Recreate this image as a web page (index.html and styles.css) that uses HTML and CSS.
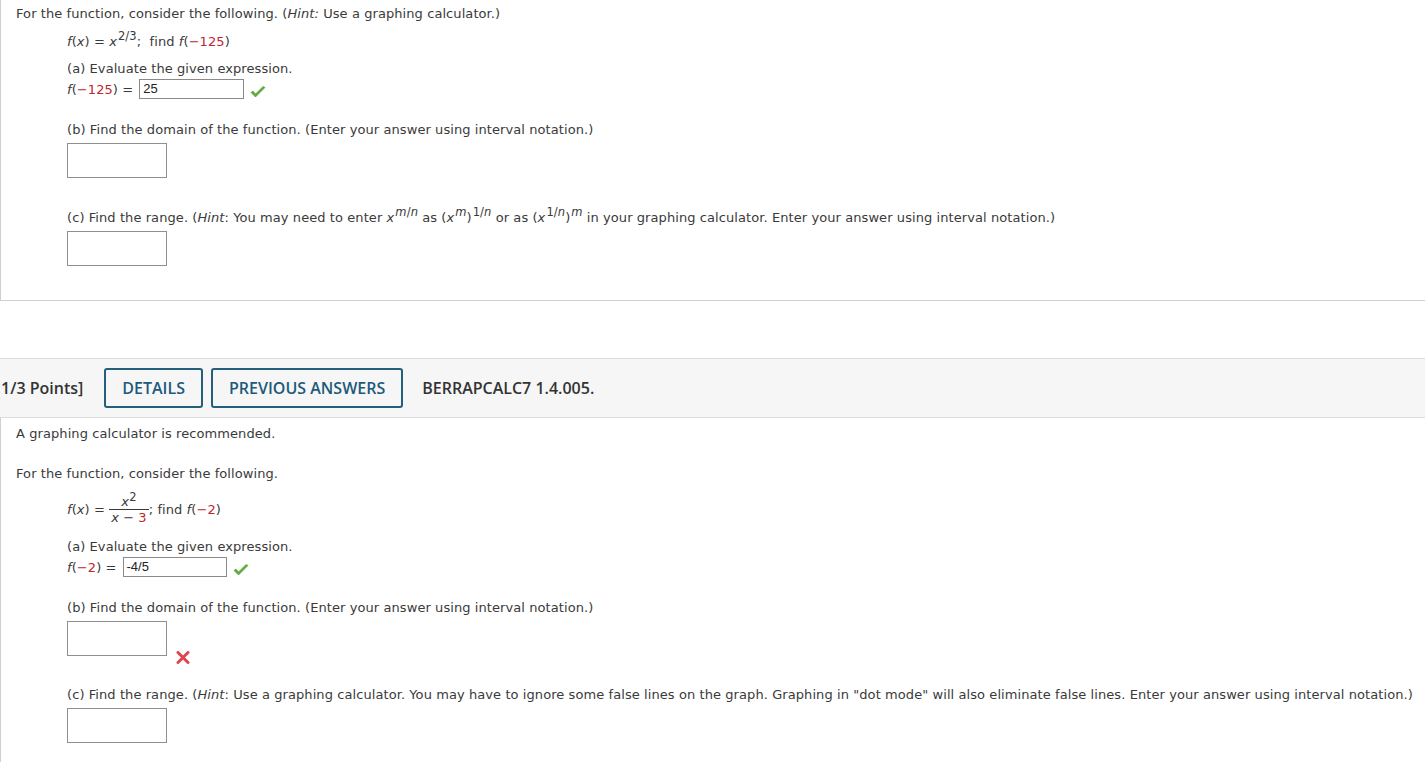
FILE: index.html
```html
<!DOCTYPE html>
<html>
<head>
<meta charset="utf-8">
<link rel="stylesheet" href="styles.css">
</head>
<body>
<div class="card card-top">
  <p class="line first">For the function, consider the following. (<i>Hint:</i> Use a graphing calculator.)</p>
  <div class="indent">
    <p class="line math1"><i>f</i>(<i>x</i>) = <i>x</i><sup>2/3</sup>;&nbsp; find <i>f</i>(<span class="red">−125</span>)</p>
    <p class="line pa">(a) Evaluate the given expression.</p>
    <div class="ansrow">
      <span><i>f</i>(<span class="red">−125</span>) = </span>
      <span class="small-input w105">25</span>
      <svg class="check" width="16" height="12" viewBox="0 0 16 12"><path d="M1 6.5 L5.5 11 L15 1.5 L13 0.5 L5.5 8 L3 5 Z" fill="#5fae3e" stroke="#4d9a2f" stroke-width="0.6" stroke-linejoin="round"/></svg>
    </div>
    <p class="line pb">(b) Find the domain of the function. (Enter your answer using interval notation.)</p>
    <div class="big-input"></div>
    <p class="line pc">(c) Find the range. (<i>Hint</i>: You may need to enter <i>x</i><sup><i>m</i>/<i>n</i></sup> as (<i>x</i><sup><i>m</i></sup>)<sup>1/<i>n</i></sup> or as (<i>x</i><sup>1/<i>n</i></sup>)<sup><i>m</i></sup> in your graphing calculator. Enter your answer using interval notation.)</p>
    <div class="big-input"></div>
  </div>
</div>

<div class="header">
  <span class="points">1/3 Points]</span>
  <span class="btn">DETAILS</span>
  <span class="btn">PREVIOUS ANSWERS</span>
  <span class="code">BERRAPCALC7 1.4.005.</span>
</div>

<div class="card card-bottom">
  <p class="line first2">A graphing calculator is recommended.</p>
  <p class="line for2">For the function, consider the following.</p>
  <div class="indent">
    <div class="mathrow">
      <span><i>f</i>(<i>x</i>) =&nbsp;</span>
      <span class="frac">
        <span class="num"><i>x</i><sup>2</sup></span>
        <span class="den"><i>x</i> − <span class="red">3</span></span>
      </span>
      <span>; find <i>f</i>(<span class="red">−2</span>)</span>
    </div>
    <p class="line pa2">(a) Evaluate the given expression.</p>
    <div class="ansrow">
      <span><i>f</i>(<span class="red">−2</span>) = </span>
      <span class="small-input w104">-4/5</span>
      <svg class="check" width="16" height="12" viewBox="0 0 16 12"><path d="M1 6.5 L5.5 11 L15 1.5 L13 0.5 L5.5 8 L3 5 Z" fill="#5fae3e" stroke="#4d9a2f" stroke-width="0.6" stroke-linejoin="round"/></svg>
    </div>
    <p class="line pb">(b) Find the domain of the function. (Enter your answer using interval notation.)</p>
    <div class="xrow">
      <div class="big-input"></div>
      <svg class="cross" width="14" height="13" viewBox="0 0 14 13"><path d="M2 1.5 L12 11.5 M12 1.5 L2 11.5" stroke="#e0454f" stroke-width="3" stroke-linecap="round"/></svg>
    </div>
    <p class="line pc2">(c) Find the range. (<i>Hint</i>: Use a graphing calculator. You may have to ignore some false lines on the graph. Graphing in "dot mode" will also eliminate false lines. Enter your answer using interval notation.)</p>
    <div class="big-input"></div>
  </div>
</div>
</body>
</html>
```

FILE: styles.css
```css
html, body {
  margin: 0;
  padding: 0;
  background: #fff;
}
body {
  font-family: "DejaVu Sans", Verdana, sans-serif;
  font-size: 13px;
  letter-spacing: 0.08px;
  color: #3a3a3a;
  overflow: hidden;
}
p { margin: 0; }
.line {
  line-height: 18px;
  white-space: nowrap;
}
sup {
  font-size: 11.5px;
  line-height: 0;
  vertical-align: 6px;
  padding-left: 1px;
}
.red { color: #c0262d; }

.card {
  border-left: 1px solid #cfcfcf;
  padding-left: 15px;
}
.card-top {
  padding-top: 5px;
  padding-bottom: 34px;
  border-bottom: 1px solid #cfcfcf;
}
.indent {
  padding-left: 51px;
}
.math1 { margin-top: 10px; }
.pa { margin-top: 9px; }
.ansrow {
  display: flex;
  align-items: center;
  height: 22px;
}
.small-input {
  display: inline-block;
  box-sizing: border-box;
  height: 20px;
  border: 1px solid #8a8a8a;
  font-family: "Liberation Sans", Arial, sans-serif;
  font-size: 13px;
  letter-spacing: 0;
  line-height: 18px;
  padding-left: 3px;
  color: #222;
  margin-left: 6px;
}
.w105 { width: 105px; }
.w104 { width: 104px; }
.check {
  margin-left: 6px;
  margin-top: 6px;
}
.pb { margin-top: 21px; }
.big-input {
  box-sizing: border-box;
  width: 100px;
  height: 35px;
  border: 1px solid #8f8f8f;
  margin-top: 4px;
}
.pc { margin-top: 31px; }

.header {
  margin-top: 57px;
  height: 58px;
  background: #f6f6f6;
  border-top: 1px solid #dcdcdc;
  border-bottom: 1px solid #dcdcdc;
  display: flex;
  align-items: center;
  font-family: "Open Sans", sans-serif;
  font-size: 16px;
  letter-spacing: 0;
}
.points {
  font-weight: 600;
  color: #333;
  padding-left: 1px;
  margin-right: 21px;
}
.btn {
  box-sizing: border-box;
  height: 40px;
  display: inline-flex;
  align-items: center;
  padding: 0 16px;
  border: 2px solid #245f7c;
  border-radius: 3px;
  color: #1d5a7a;
  font-weight: 600;
  margin-right: 8px;
}
.code {
  margin-left: 11px;
  font-weight: 600;
  color: #333;
}

.card-bottom {
  padding-top: 7px;
  height: 400px;
}
.for2 { margin-top: 22px; }
.mathrow {
  display: flex;
  align-items: center;
  height: 38px;
  margin-top: 7px;
  white-space: nowrap;
}
.frac {
  display: inline-flex;
  flex-direction: column;
  align-items: center;
  margin-top: 2px;
}
.num {
  line-height: 14px;
  padding: 0 1px;
}
.num sup { vertical-align: 5px; padding-left: 0; }
.den {
  line-height: 15px;
  border-top: 1px solid #3a3a3a;
  padding: 0 2px;
}
.pa2 { margin-top: 10px; }
.xrow {
  display: flex;
  align-items: flex-start;
  height: 35px;
}
.cross {
  margin-left: 9px;
  margin-top: 34px;
}
.pc2 { margin-top: 34px; }
```
